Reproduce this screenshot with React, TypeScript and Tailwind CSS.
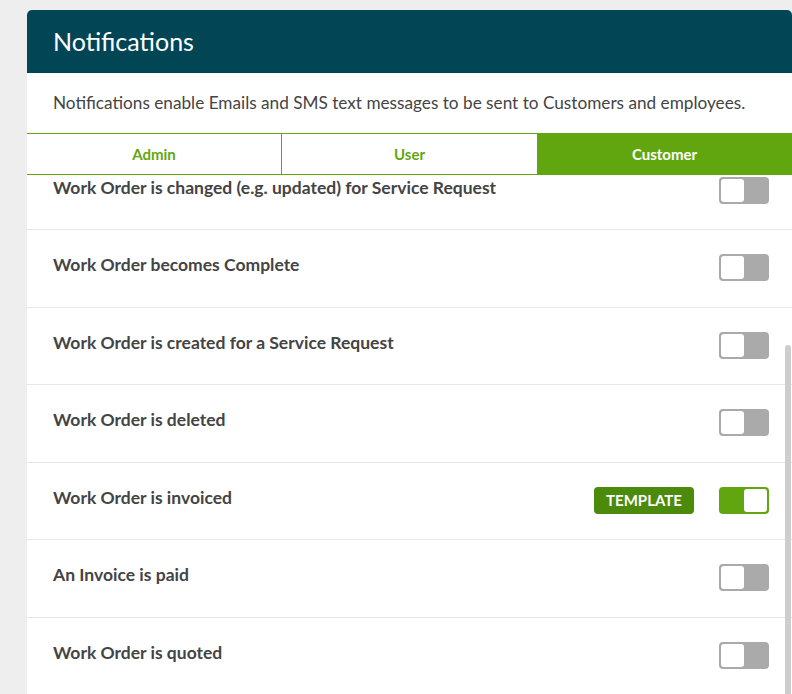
import React from "react";

const rows: { label: string; on?: boolean; template?: boolean }[] = [
  { label: "Work Order is changed (e.g. updated) for Service Request" },
  { label: "Work Order becomes Complete" },
  { label: "Work Order is created for a Service Request" },
  { label: "Work Order is deleted" },
  { label: "Work Order is invoiced", on: true, template: true },
  { label: "An Invoice is paid" },
  { label: "Work Order is quoted" },
];

function Toggle({ on }: { on?: boolean }) {
  return on ? (
    <div className="flex h-[27px] w-[50px] justify-end rounded-[4px] border-2 border-[#62a60f] bg-[#62a60f]">
      <div className="h-full w-[23px] rounded-[3px] bg-white" />
    </div>
  ) : (
    <div className="flex h-[27px] w-[50px] justify-start rounded-[4px] border-2 border-[#aaaaaa] bg-[#aaaaaa]">
      <div className="h-full w-[23px] rounded-[3px] bg-white" />
    </div>
  );
}

export default function App() {
  return (
    <div
      className="h-[694px] overflow-hidden bg-[#eeeeee] pl-[27px] pt-[10px]"
      style={{ fontFamily: "Lato, 'Open Sans', sans-serif" }}
    >
      <div className="relative flex h-[684px] w-[765px] flex-col overflow-hidden rounded-t-[5px] bg-white">
        <div className="flex h-[63px] shrink-0 items-center bg-[#024656] px-[26px] text-[25px] text-white">
          Notifications
        </div>
        <div className="flex h-[60px] shrink-0 items-center px-[26px] text-[17.2px] text-[#444444]">
          Notifications enable Emails and SMS text messages to be sent to Customers and employees.
        </div>
        <div className="grid h-[42px] shrink-0 grid-cols-3 border-y border-[#62a60f] text-[15px] font-bold">
          <div className="flex items-center justify-center border-r border-[#62a60f] text-[#62a60f]">Admin</div>
          <div className="flex items-center justify-center text-[#62a60f]">User</div>
          <div className="flex items-center justify-center bg-[#62a60f] text-white">Customer</div>
        </div>
        <div className="flex-1 overflow-hidden">
          <div className="-mt-[22.5px]">
            {rows.map((r) => (
              <div
                key={r.label}
                className="flex h-[77.5px] items-start border-b border-[#e8e8e8] px-[26px] pr-[23px]"
              >
                <div className="mt-[24px] flex-1 text-[17.5px] leading-[1.25] font-bold text-[#444444]">
                  {r.label}
                </div>
                {r.template && (
                  <div className="mr-[25px] mt-[24px] flex h-[27px] w-[100px] items-center justify-center rounded-[4px] bg-[#4b8a0b] text-[15px] font-bold text-white">
                    TEMPLATE
                  </div>
                )}
                <div className="mt-[24px]">
                  <Toggle on={r.on} />
                </div>
              </div>
            ))}
          </div>
        </div>
        <div className="absolute right-[1px] top-[335px] h-[400px] w-[6px] rounded-full bg-[#cdcdcd]" />
      </div>
    </div>
  );
}
